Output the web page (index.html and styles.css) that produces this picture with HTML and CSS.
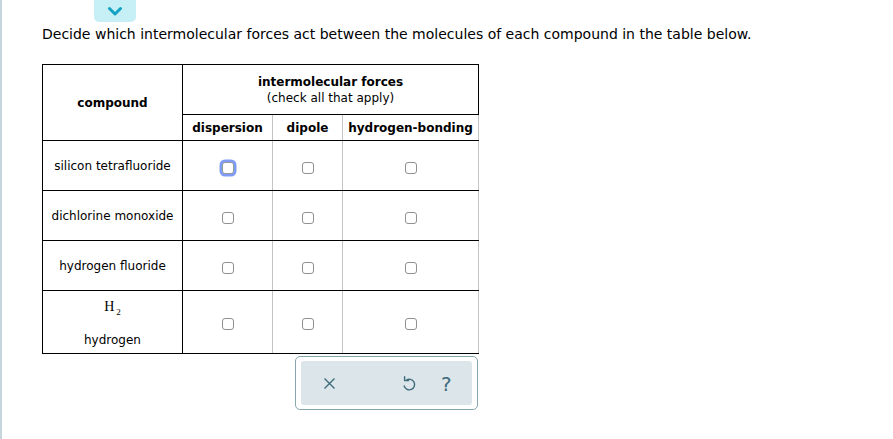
FILE: index.html
```html
<!DOCTYPE html>
<html>
<head>
<meta charset="utf-8">
<link rel="stylesheet" href="styles.css">
</head>
<body>
<div class="page">
  <div class="tab">
    <svg width="16" height="10" viewBox="0 0 16 10"><path d="M2.5 2.5 L8 8 L13.5 2.5" fill="none" stroke="#13a3c2" stroke-width="3" stroke-linecap="round" stroke-linejoin="round"/></svg>
  </div>
  <p class="prompt">Decide which intermolecular forces act between the molecules of each compound in the table below.</p>
  <div class="work">
    <table class="imf">
      <colgroup>
        <col class="c1"><col class="c2"><col class="c3"><col class="c4">
      </colgroup>
      <thead>
        <tr class="h1">
          <th rowspan="2" class="comp">compound</th>
          <th colspan="3" class="forces">intermolecular forces<br><span class="sub">(check all that apply)</span></th>
        </tr>
        <tr class="h2">
          <th class="k">dispersion</th>
          <th class="k">dipole</th>
          <th class="k last">hydrogen-bonding</th>
        </tr>
      </thead>
      <tbody>
        <tr class="r">
          <td class="name">silicon tetrafluoride</td>
          <td class="k"><span class="box focus"></span></td>
          <td class="k"><span class="box"></span></td>
          <td class="k last"><span class="box"></span></td>
        </tr>
        <tr class="r">
          <td class="name">dichlorine monoxide</td>
          <td class="k"><span class="box"></span></td>
          <td class="k"><span class="box"></span></td>
          <td class="k last"><span class="box"></span></td>
        </tr>
        <tr class="r">
          <td class="name">hydrogen fluoride</td>
          <td class="k"><span class="box"></span></td>
          <td class="k"><span class="box"></span></td>
          <td class="k last"><span class="box"></span></td>
        </tr>
        <tr class="r tall">
          <td class="name"><div class="formula">H<sub>2</sub></div><div class="hname">hydrogen</div></td>
          <td class="k"><span class="box"></span></td>
          <td class="k"><span class="box"></span></td>
          <td class="k last"><span class="box"></span></td>
        </tr>
      </tbody>
    </table>
    <div class="tools">
      <div class="toolbar">
        <span class="tool x">
          <svg width="13" height="13" viewBox="0 0 13 13"><path d="M1.5 1.5 L11.5 11.5 M11.5 1.5 L1.5 11.5" stroke="#3d6c7c" stroke-width="1.4" fill="none"/></svg>
        </span>
        <span class="tool undo">
          <svg width="14" height="17" viewBox="0 0 14 17"><path d="M4.2 5.2 A5.3 5.3 0 1 1 2.2 11" stroke="#3d6c7c" stroke-width="1.4" fill="none" stroke-linecap="round"/><path d="M2.6 1.8 V5.6 H6.6" stroke="#3d6c7c" stroke-width="1.4" fill="none" stroke-linecap="round" stroke-linejoin="round"/></svg>
        </span>
        <span class="tool q">?</span>
      </div>
    </div>
  </div>
</div>
</body>
</html>
```
FILE: styles.css
```css
html, body {
  margin: 0;
  padding: 0;
  background: #ffffff;
}
body {
  font-family: "DejaVu Sans", Verdana, sans-serif;
  color: #000;
  width: 893px;
  height: 439px;
  overflow: hidden;
}
.page {
  border-left: 2px solid #c7d6de;
  height: 439px;
  box-sizing: border-box;
  padding-left: 40px;
  position: relative;
}
.tab {
  position: absolute;
  left: 92px;
  top: 0;
  width: 42px;
  height: 22px;
  background: #c6eff6;
  border-radius: 0 0 5px 5px;
  display: flex;
  align-items: center;
  justify-content: center;
}
.tab svg { margin-top: -1px; }
.prompt {
  margin: 0;
  padding-top: 25px;
  font-size: 14px;
  line-height: 18px;
}
.work {
  margin-top: 21px;
  width: 436px;
}
table.imf {
  border-collapse: collapse;
  width: 436px;
  table-layout: fixed;
  font-size: 12px;
}
col.c1 { width: 140px; }
col.c2 { width: 90px; }
col.c3 { width: 70px; }
col.c4 { width: 136px; }
table.imf th, table.imf td {
  border: 1px solid #000;
  text-align: center;
  padding: 0;
}
table.imf th { font-weight: bold; }
tr.h1 { height: 50px; }
tr.h2 { height: 26px; }
tr.r { height: 50px; }
tr.r.tall { height: 63px; }
.forces { line-height: 16px; padding-top: 2px; }
.forces .sub { font-weight: normal; }
table.imf th.k, table.imf td.k {
  border-left-color: #c4c4c4;
  border-right-color: #c4c4c4;
}
table.imf .last { border-right-color: #000; }
table.imf td.name { border-right: 1px solid #000; }
table.imf tr > :nth-child(2).k { border-left-color: #000; }
.box {
  display: inline-block;
  width: 10px;
  height: 10px;
  border: 1px solid #919191;
  border-radius: 3px;
  background: #fff;
  vertical-align: middle;
  margin-top: 4px;
}
.box.focus {
  box-shadow: 0 0 0 2.5px #7f9cf5;
  border-color: #9a9a9a;
}
.formula {
  font-family: "Liberation Serif", "Times New Roman", serif;
  font-size: 14px;
  line-height: 18px;
}
.formula sub { font-size: 9px; vertical-align: -4px; margin-left: 2px; }
.hname { margin-top: 12px; line-height: 14px; }
.tools {
  margin-left: 253px;
  margin-top: 2px;
  width: 183px;
  height: 54px;
  box-sizing: border-box;
  border: 1px solid #86a7ae;
  border-radius: 5px;
  padding: 4px 5px;
  background: #fff;
}
.toolbar {
  height: 44px;
  background: #dce5e9;
  border-radius: 3px;
  display: flex;
  align-items: center;
  padding-left: 22px;
}
.tool {
  display: flex;
  align-items: center;
  justify-content: center;
  color: #3d6c7c;
}
.tool.x { width: 13px; margin-top: 1px; }
.tool.undo { width: 14px; margin-left: 66px; margin-top: 1px; }
.tool.q {
  margin-left: 25px;
  font-family: "DejaVu Sans", sans-serif;
  font-size: 20px;
  line-height: 22px;
  margin-top: 1px;
}
```
